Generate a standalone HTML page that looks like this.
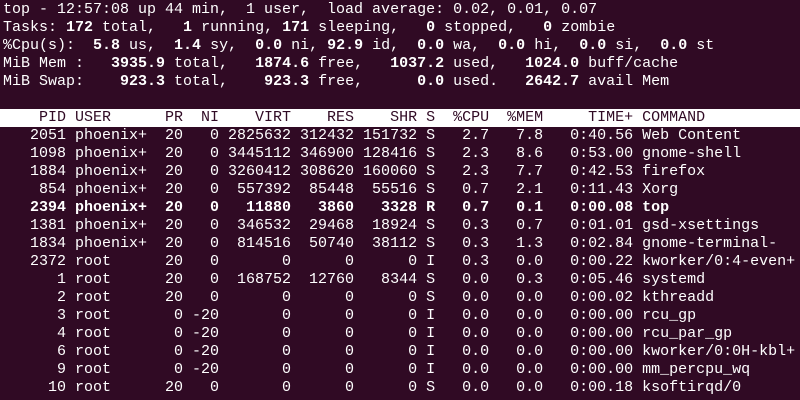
<!DOCTYPE html>
<html><head><meta charset="utf-8"><style>
html,body{margin:0;padding:0;background:#300a24;width:800px;height:400px;overflow:hidden}
pre{margin:0;position:absolute;left:3px;top:1px;font-family:"Liberation Mono",monospace;font-size:15px;line-height:18px;color:#fff;white-space:pre}
b{font-weight:bold}
.hd{display:block;background:#fff;color:#300a24;margin-left:-3px;padding-left:3px;width:800px}
</style></head><body>
<pre>top - 12:57:08 up 44 min,  1 user,  load average: 0.02, 0.01, 0.07
Tasks: <b>172</b> total,   <b>1</b> running, <b>171</b> sleeping,   <b>0</b> stopped,   <b>0</b> zombie
%Cpu(s):  <b>5.8</b> us,  <b>1.4</b> sy,  <b>0.0</b> ni, <b>92.9</b> id,  <b>0.0</b> wa,  <b>0.0</b> hi,  <b>0.0</b> si,  <b>0.0</b> st
MiB Mem :   <b>3935.9</b> total,   <b>1874.6</b> free,   <b>1037.2</b> used,   <b>1024.0</b> buff/cache
MiB Swap:    <b>923.3</b> total,    <b>923.3</b> free,      <b>0.0</b> used.   <b>2642.7</b> avail Mem

<span class="hd">    PID USER      PR  NI    VIRT    RES    SHR S  %CPU  %MEM     TIME+ COMMAND</span>   2051 phoenix+  20   0 2825632 312432 151732 S   2.7   7.8   0:40.56 Web Content
   1098 phoenix+  20   0 3445112 346900 128416 S   2.3   8.6   0:53.00 gnome-shell
   1884 phoenix+  20   0 3260412 308620 160060 S   2.3   7.7   0:42.53 firefox
    854 phoenix+  20   0  557392  85448  55516 S   0.7   2.1   0:11.43 Xorg
<b>   2394 phoenix+  20   0   11880   3860   3328 R   0.7   0.1   0:00.08 top</b>
   1381 phoenix+  20   0  346532  29468  18924 S   0.3   0.7   0:01.01 gsd-xsettings
   1834 phoenix+  20   0  814516  50740  38112 S   0.3   1.3   0:02.84 gnome-terminal-
   2372 root      20   0       0      0      0 I   0.3   0.0   0:00.22 kworker/0:4-even+
      1 root      20   0  168752  12760   8344 S   0.0   0.3   0:05.46 systemd
      2 root      20   0       0      0      0 S   0.0   0.0   0:00.02 kthreadd
      3 root       0 -20       0      0      0 I   0.0   0.0   0:00.00 rcu_gp
      4 root       0 -20       0      0      0 I   0.0   0.0   0:00.00 rcu_par_gp
      6 root       0 -20       0      0      0 I   0.0   0.0   0:00.00 kworker/0:0H-kbl+
      9 root       0 -20       0      0      0 I   0.0   0.0   0:00.00 mm_percpu_wq
     10 root      20   0       0      0      0 S   0.0   0.0   0:00.18 ksoftirqd/0
</pre>
</body></html>
